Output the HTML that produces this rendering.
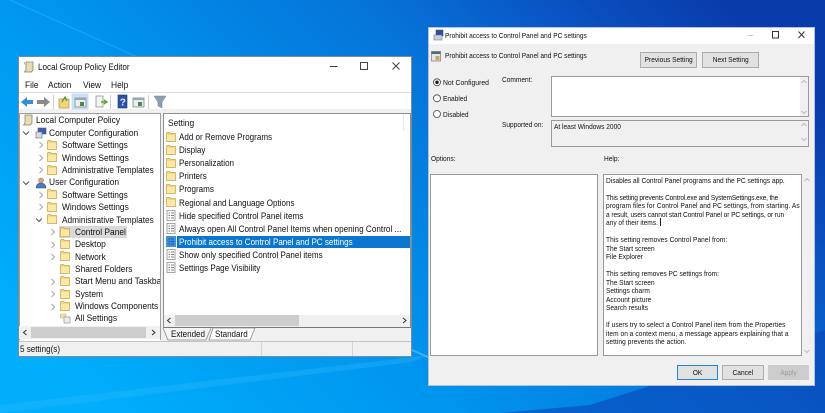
<!DOCTYPE html>
<html><head><meta charset="utf-8"><style>
html,body{margin:0;padding:0}
body{width:825px;height:413px;overflow:hidden;position:relative;background:#0a6fd6}
#w{position:absolute;left:0;top:0;width:825px;height:413px;overflow:hidden;filter:blur(.3px);font-family:"Liberation Sans",sans-serif;color:#111}
#w div{position:absolute;box-sizing:border-box}
.t{white-space:nowrap;font-size:8.8px;line-height:12px;height:12px;transform:scaleX(.955);transform-origin:0 0}
.l{transform:scaleX(.915)}
.d{font-size:7.6px;transform:scaleX(.866);transform-origin:0 0;white-space:nowrap;line-height:9px;height:9px}
svg{position:absolute;overflow:visible}
.b{background:#e1e1e1;border:1px solid #adadad;text-align:center;font-size:7.6px;line-height:13px}
.b span{display:inline-block;transform:scaleX(.87);white-space:nowrap}
</style></head><body><div id="w">
<svg width="0" height="0" style="position:absolute"><defs>
<symbol id="f" viewBox="0 0 10 10"><path d="M.5 2V9.5H9.5V1.5H4.5L3.5.5H1L.5 1Z" fill="#f6d77e" stroke="#c9a548" stroke-width=".7"/><path d="M1 3H9V9H1Z" fill="#fbe7a6"/></symbol>
<symbol id="p" viewBox="0 0 10 11"><path d="M1 .5H9V10.5H1Z" fill="#fff" stroke="#8a8a8a" stroke-width=".8"/><path d="M2.5 3H4M5 3H8M2.5 5.5H4M5 5.5H8M2.5 8H4M5 8H8" stroke="#555" stroke-width=".8"/></symbol>
<symbol id="c" viewBox="0 0 6 8"><path d="M1.5 1L4.5 4L1.5 7" fill="none" stroke="#a6a6a6" stroke-width="1"/></symbol>
<symbol id="o" viewBox="0 0 8 6"><path d="M1 1.5L4 4.5L7 1.5" fill="none" stroke="#555" stroke-width="1"/></symbol>
</defs></svg>
<svg width="825" height="413" style="left:0;top:0">
<defs>
<linearGradient id="bg" x1="0" y1="0.75" x2="1" y2="0.25"><stop offset="0" stop-color="#00aefc"/><stop offset=".35" stop-color="#0094ee"/><stop offset=".66" stop-color="#0672d8"/><stop offset=".87" stop-color="#0a4dbd"/><stop offset="1" stop-color="#0a3bab"/></linearGradient>
</defs>
<rect width="825" height="413" fill="url(#bg)"/>
<path d="M0 405L430 355L412 362L0 413Z" fill="#35bdfb" opacity=".3"/>
<path d="M500 413L590 405L825 330V413Z" fill="#0a45b8" opacity=".6"/>
<path d="M10 0L200 85" stroke="#4dbdf8" stroke-width="1" opacity=".45"/>
<path d="M412 350L430 358" stroke="#7fd2fb" stroke-width="2" opacity=".5"/>
</svg>

<!-- LEFT WINDOW -->
<div style="left:18px;top:56px;width:394px;height:301px;background:#fff;border:1px solid #7f8a96"></div>
<div style="left:19px;top:92px;width:392px;height:1px;background:#d8d8d8"></div>
<div style="left:19px;top:109px;width:392px;height:4px;background:#f0f0f0"></div>
<svg width="12" height="12" style="left:23px;top:61px"><path d="M3 1H10V9L8.5 11H1.5L3 9Z" fill="#e8dcb4" stroke="#8d8467" stroke-width=".8"/><path d="M3 1Q1 1 1.5 3H3" fill="#fff" stroke="#8d8467" stroke-width=".6"/></svg>
<div class="t" style="left:38px;top:61px;transform:scaleX(.923)">Local Group Policy Editor</div>
<div class="t" style="left:25px;top:79px">File</div>
<div class="t" style="left:48px;top:79px">Action</div>
<div class="t" style="left:83px;top:79px">View</div>
<div class="t" style="left:111px;top:79px">Help</div>
<svg width="80" height="12" style="left:327px;top:60px"><path d="M3 6.500H10.500" stroke="#333" stroke-width="1"/><rect x="33.500" y="2.500" width="7" height="7" fill="none" stroke="#444" stroke-width="1"/><path d="M65.500 2.500L72.500 9.500M72.500 2.500L65.500 9.500" stroke="#444" stroke-width="1"/></svg>

<!-- toolbar -->
<svg width="160" height="16" style="left:19px;top:94px">
<path d="M2 8L8 3V6H14V10H8V13Z" fill="#2f8fdc"/>
<path d="M31 8L25 3V6H18V10H25V13Z" fill="#8a8a8a"/>
<path d="M34.500 1V15M91.500 1V15M129.500 1V15" stroke="#d0d0d0"/>
<path d="M40 5H50V14H40Z" fill="#f3d27a" stroke="#b9954a" stroke-width=".7"/><path d="M43 8L46 3L48 7" fill="none" stroke="#3d9b2f" stroke-width="1.200"/>
<rect x="53" y="0" width="16" height="15" fill="#cde4f7" stroke="#a9d0ee" stroke-width=".6"/>
<rect x="56" y="4" width="11" height="9" fill="#e8eef2" stroke="#7f8b93" stroke-width=".8"/><rect x="56" y="4" width="11" height="2" fill="#9aa7b0"/><rect x="61" y="8" width="4" height="4" fill="#4d8a4a"/>
<path d="M77 2H84V13H77Z" fill="#f4f4f0" stroke="#8e8e8e" stroke-width=".8"/><path d="M82 8H87M85 6L88 8L85 10" fill="none" stroke="#5ca83c" stroke-width="1.400"/>
<rect x="99" y="1" width="9" height="13" fill="#2b52a8" stroke="#1b3578" stroke-width=".6"/><text x="100.800" y="11.500" font-family="Liberation Sans" font-size="10" font-weight="bold" fill="#dfe8ff">?</text>
<rect x="114" y="4" width="11" height="9" fill="#e8eef2" stroke="#7f8b93" stroke-width=".8"/><rect x="114" y="4" width="11" height="2" fill="#9aa7b0"/><rect x="119" y="8" width="4" height="4" fill="#4d8a4a"/>
<path d="M135 2H147L143 8V14L139 12V8Z" fill="#8ba0ad" stroke="#6f8490" stroke-width=".5"/>
</svg>

<!-- tree -->
<div style="left:19px;top:113px;width:142px;height:227px;background:#fff;border:1px solid #a0a0a0;border-bottom:0"></div>
<div style="left:161px;top:113px;width:2px;height:227px;background:#f0f0f0"></div>
<div style="left:59px;top:226px;width:68px;height:12px;background:#d9d9d9"></div>
<svg width="12" height="12" style="left:22px;top:114px"><path d="M3 1H10V9L8.500 11H1.500L3 9Z" fill="#e8dcb4" stroke="#8d8467" stroke-width=".8"/></svg>
<div class="t" style="left:36px;top:114px">Local Computer Policy</div>
<svg width="8" height="6" style="left:22px;top:130px"><use href="#o" width="8" height="6"/></svg>
<svg width="12" height="12" style="left:35px;top:127px"><rect x="3" y="1" width="8" height="6" fill="#3a5fb8" stroke="#555" stroke-width=".6"/><rect x="1" y="5" width="6" height="6" fill="#d8dde6" stroke="#666" stroke-width=".6"/></svg>
<div class="t" style="left:49px;top:127px">Computer Configuration</div>
<svg width="6" height="8" style="left:38px;top:141px"><use href="#c" width="6" height="8"/></svg>
<svg width="10" height="10" style="left:47px;top:140px"><use href="#f" width="10" height="10"/></svg>
<div class="t" style="left:62px;top:139px">Software Settings</div>
<svg width="6" height="8" style="left:38px;top:154px"><use href="#c" width="6" height="8"/></svg>
<svg width="10" height="10" style="left:47px;top:152px"><use href="#f" width="10" height="10"/></svg>
<div class="t" style="left:62px;top:151.500px">Windows Settings</div>
<svg width="6" height="8" style="left:38px;top:166px"><use href="#c" width="6" height="8"/></svg>
<svg width="10" height="10" style="left:47px;top:165px"><use href="#f" width="10" height="10"/></svg>
<div class="t" style="left:62px;top:164px;transform:scaleX(.94)">Administrative Templates</div>
<svg width="8" height="6" style="left:22px;top:180px"><use href="#o" width="8" height="6"/></svg>
<svg width="12" height="12" style="left:35px;top:177px"><circle cx="6" cy="3.500" r="2.500" fill="#d9a77a" stroke="#666" stroke-width=".5"/><path d="M1 11Q1 6 6 6Q11 6 11 11Z" fill="#4a78c8" stroke="#555" stroke-width=".5"/></svg>
<div class="t" style="left:49px;top:176px">User Configuration</div>
<svg width="6" height="8" style="left:38px;top:191px"><use href="#c" width="6" height="8"/></svg>
<svg width="10" height="10" style="left:47px;top:189px"><use href="#f" width="10" height="10"/></svg>
<div class="t" style="left:62px;top:189px">Software Settings</div>
<svg width="6" height="8" style="left:38px;top:203px"><use href="#c" width="6" height="8"/></svg>
<svg width="10" height="10" style="left:47px;top:202px"><use href="#f" width="10" height="10"/></svg>
<div class="t" style="left:62px;top:201px">Windows Settings</div>
<svg width="8" height="6" style="left:35px;top:217px"><use href="#o" width="8" height="6"/></svg>
<svg width="10" height="10" style="left:47px;top:214px"><use href="#f" width="10" height="10"/></svg>
<div class="t" style="left:62px;top:213.500px;transform:scaleX(.94)">Administrative Templates</div>
<svg width="6" height="8" style="left:50px;top:228px"><use href="#c" width="6" height="8"/></svg>
<svg width="10" height="10" style="left:60px;top:227px"><use href="#f" width="10" height="10"/></svg>
<div class="t" style="left:75px;top:226px">Control Panel</div>
<svg width="6" height="8" style="left:50px;top:241px"><use href="#c" width="6" height="8"/></svg>
<svg width="10" height="10" style="left:60px;top:239px"><use href="#f" width="10" height="10"/></svg>
<div class="t" style="left:75px;top:238px">Desktop</div>
<svg width="6" height="8" style="left:50px;top:253px"><use href="#c" width="6" height="8"/></svg>
<svg width="10" height="10" style="left:60px;top:251px"><use href="#f" width="10" height="10"/></svg>
<div class="t" style="left:75px;top:250.500px">Network</div>
<svg width="10" height="10" style="left:60px;top:264px"><use href="#f" width="10" height="10"/></svg>
<div class="t" style="left:75px;top:263px">Shared Folders</div>
<svg width="6" height="8" style="left:50px;top:278px"><use href="#c" width="6" height="8"/></svg>
<svg width="10" height="10" style="left:60px;top:276px"><use href="#f" width="10" height="10"/></svg>
<div style="left:75px;top:275px;width:85px;height:12px;overflow:hidden"><div class="t" style="left:0;top:0">Start Menu and Taskbar</div></div>
<svg width="6" height="8" style="left:50px;top:290px"><use href="#c" width="6" height="8"/></svg>
<svg width="10" height="10" style="left:60px;top:289px"><use href="#f" width="10" height="10"/></svg>
<div class="t" style="left:75px;top:288px">System</div>
<svg width="6" height="8" style="left:50px;top:303px"><use href="#c" width="6" height="8"/></svg>
<svg width="10" height="10" style="left:60px;top:301px"><use href="#f" width="10" height="10"/></svg>
<div style="left:75px;top:300px;width:85px;height:12px;overflow:hidden"><div class="t" style="left:0;top:0;transform:scaleX(.945)">Windows Components</div></div>
<svg width="12" height="12" style="left:60px;top:312px"><path d="M.5 2H6V6H.5Z" fill="#f3dfa0" stroke="#c9b578" stroke-width=".6"/><path d="M4 5H10V11H4Z" fill="#eee" stroke="#999" stroke-width=".7"/></svg>
<div class="t" style="left:75px;top:312px">All Settings</div>
<div style="left:19px;top:326px;width:141px;height:13px;background:#f0f0f0"></div>
<div style="left:31px;top:327px;width:115px;height:11px;background:#cdcdcd"></div>
<svg width="141" height="13" style="left:19px;top:326px"><path d="M7.500 4L4.500 6.500L7.500 9" fill="none" stroke="#333"/><path d="M133 4L136 6.500L133 9" fill="none" stroke="#333"/></svg>

<!-- list -->
<div style="left:163px;top:113px;width:248px;height:215px;background:#fff;border:1px solid #8f8f8f;border-bottom:1px solid #777"></div>
<div class="t" style="left:168px;top:116.500px">Setting</div>
<div style="left:403px;top:114px;width:1px;height:17px;background:#e5e5e5"></div>
<div style="left:177px;top:236px;width:233px;height:12px;background:#0a76d0"></div>
<svg width="10" height="10" style="left:166px;top:132px"><use href="#f" width="10" height="10"/></svg>
<div class="t l" style="left:179px;top:131px">Add or Remove Programs</div>
<svg width="10" height="10" style="left:166px;top:145px"><use href="#f" width="10" height="10"/></svg>
<div class="t l" style="left:179px;top:144px">Display</div>
<svg width="10" height="10" style="left:166px;top:158px"><use href="#f" width="10" height="10"/></svg>
<div class="t l" style="left:179px;top:157px">Personalization</div>
<svg width="10" height="10" style="left:166px;top:171px"><use href="#f" width="10" height="10"/></svg>
<div class="t l" style="left:179px;top:170px">Printers</div>
<svg width="10" height="10" style="left:166px;top:184px"><use href="#f" width="10" height="10"/></svg>
<div class="t l" style="left:179px;top:183px">Programs</div>
<svg width="10" height="10" style="left:166px;top:197px"><use href="#f" width="10" height="10"/></svg>
<div class="t l" style="left:179px;top:196.500px">Regional and Language Options</div>
<svg width="10" height="11" style="left:166px;top:210px"><use href="#p" width="10" height="11"/></svg>
<div class="t l" style="left:179px;top:209.500px;transform:scaleX(.925)">Hide specified Control Panel items</div>
<svg width="10" height="11" style="left:166px;top:223px"><use href="#p" width="10" height="11"/></svg>
<div class="t l" style="left:179px;top:222.500px;transform:scaleX(.93)">Always open All Control Panel Items when opening Control ...</div>
<svg width="10" height="11" style="left:166px;top:236px"><rect width="10" height="11" fill="#3f8ed6"/><path d="M2.500 3H4M5 3H8M2.500 5.500H4M5 5.500H8M2.500 8H4M5 8H8" stroke="#0d4f96" stroke-width=".8"/></svg>
<div class="t l" style="left:179px;top:235.500px;color:#fff">Prohibit access to Control Panel and PC settings</div>
<svg width="10" height="11" style="left:166px;top:249px"><use href="#p" width="10" height="11"/></svg>
<div class="t l" style="left:179px;top:248.500px">Show only specified Control Panel items</div>
<svg width="10" height="11" style="left:166px;top:262px"><use href="#p" width="10" height="11"/></svg>
<div class="t l" style="left:179px;top:261.500px">Settings Page Visibility</div>
<div style="left:164px;top:315px;width:246px;height:12px;background:#f0f0f0"></div>
<div style="left:175px;top:315px;width:124px;height:11px;background:#cdcdcd"></div>
<svg width="246" height="12" style="left:164px;top:315px"><path d="M6.500 3L3.500 5.500L6.500 8" fill="none" stroke="#333"/><path d="M239 3L242 5.500L239 8" fill="none" stroke="#333"/></svg>
<!-- tabs -->
<div style="left:161px;top:328px;width:250px;height:13px;background:#f0f0f0"></div>
<svg width="100" height="14" style="left:162px;top:327px"><path d="M1 1L6 13H44L49 1" fill="#f4f4f4" stroke="#8a8a8a" stroke-width=".8"/><path d="M47 13L51 1H93L88 13Z" fill="#fff" stroke="#8a8a8a" stroke-width=".8"/></svg>
<div class="t l" style="left:170.500px;top:328px">Extended</div>
<div class="t l" style="left:214.500px;top:328px">Standard</div>
<!-- status -->
<div style="left:19px;top:341px;width:392px;height:15px;background:#f0f0f0;border-top:1px solid #c4c4c4"></div>
<div style="left:261px;top:342px;width:1px;height:14px;background:#d4d4d4"></div>
<div style="left:352px;top:342px;width:1px;height:14px;background:#d4d4d4"></div>
<div class="t" style="left:20px;top:343px;transform:scaleX(.92)">5 setting(s)</div>

<!-- RIGHT WINDOW -->
<div style="left:428px;top:27px;width:387px;height:359px;background:#f0f0f0;border:1px solid #b8c2cc"></div>
<div style="left:429px;top:28px;width:385px;height:16px;background:#fff"></div>
<svg width="11" height="11" style="left:433px;top:30px"><rect x="3" y="0" width="7" height="6" fill="#2d4ea8" stroke="#444" stroke-width=".5"/><rect x="1" y="5" width="8" height="5" fill="#c9d0dc" stroke="#666" stroke-width=".5"/></svg>
<div class="d" style="left:445px;top:31px">Prohibit access to Control Panel and PC settings</div>
<svg width="70" height="10" style="left:746px;top:30px"><path d="M1 5.500H7" stroke="#ccc"/><rect x="26.500" y="1.500" width="6" height="6.500" fill="none" stroke="#333"/><path d="M52.500 1.500L58.500 8M58.500 1.500L52.500 8" stroke="#333"/></svg>
<svg width="11" height="11" style="left:431px;top:51px"><rect x=".5" y=".5" width="9" height="9.500" fill="#e4e7ea" stroke="#777" stroke-width=".7"/><rect x=".5" y=".5" width="9" height="2.500" fill="#4d6a7e"/><rect x="4.500" y="5" width="4" height="4" fill="#caa94f"/></svg>
<div class="d" style="left:445px;top:51px">Prohibit access to Control Panel and PC settings</div>
<div class="b" style="left:640px;top:52px;width:57px;height:16px"><span>Previous Setting</span></div>
<div class="b" style="left:702px;top:52px;width:57px;height:16px"><span>Next Setting</span></div>

<svg width="12" height="50" style="left:431px;top:76px"><circle cx="6" cy="6.300" r="3.500" fill="#fff" stroke="#444" stroke-width=".8"/><circle cx="6" cy="6.300" r="1.800" fill="#222"/><circle cx="6" cy="22.300" r="3.500" fill="#fff" stroke="#444" stroke-width=".8"/><circle cx="6" cy="38" r="3.500" fill="#fff" stroke="#444" stroke-width=".8"/></svg>
<div class="d" style="left:443px;top:78px;transform:scaleX(.9)">Not Configured</div>
<div class="d" style="left:443px;top:94px">Enabled</div>
<div class="d" style="left:443px;top:110px">Disabled</div>
<div class="d" style="left:502px;top:75px">Comment:</div>
<div class="d" style="left:502px;top:119.500px">Supported on:</div>
<div style="left:551px;top:76px;width:258px;height:41px;background:#fff;border:1px solid #999"></div>
<div style="left:800px;top:77px;width:8px;height:39px;background:#f0f0f0"></div>
<div style="left:551px;top:120px;width:258px;height:27px;background:#f0f0f0;border:1px solid #999"></div>
<svg width="8" height="70" style="left:800px;top:78px"><path d="M1.500 5L4 2.500L6.500 5M1.500 33L4 35.500L6.500 33M1.500 48L4 45.500L6.500 48M1.500 60L4 62.500L6.500 60" fill="none" stroke="#bbb"/></svg>
<div class="d" style="left:554px;top:122px">At least Windows 2000</div>
<div class="d" style="left:431px;top:154px">Options:</div>
<div class="d" style="left:604px;top:154px">Help:</div>
<div style="left:430px;top:174px;width:168px;height:182px;background:#fff;border:1px solid #999"></div>
<div style="left:603px;top:174px;width:199px;height:182px;background:#fff;border:1px solid #999"></div>
<svg width="8" height="180" style="left:803px;top:175px"><path d="M1.500 6L4 3.500L6.500 6M1.500 175L4 177.500L6.500 175" fill="none" stroke="#bbb"/></svg>
<div class="d" style="left:606px;top:175.500px">Disables all Control Panel programs and the PC settings app.</div>
<div class="d" style="left:606px;top:192.500px;letter-spacing:-.18px">This setting prevents Control.exe and SystemSettings.exe, the</div>
<div class="d" style="left:606px;top:201px;letter-spacing:.09px">program files for Control Panel and PC settings, from starting. As</div>
<div class="d" style="left:606px;top:209.500px;letter-spacing:-.09px">a result, users cannot start Control Panel or PC settings, or run</div>
<div class="d" style="left:606px;top:218px">any of their items.</div>
<div style="left:660px;top:218px;width:1px;height:8px;background:#222"></div>
<div class="d" style="left:606px;top:235px;letter-spacing:.06px">This setting removes Control Panel from:</div>
<div class="d" style="left:606px;top:243.500px">The Start screen</div>
<div class="d" style="left:606px;top:252px">File Explorer</div>
<div class="d" style="left:606px;top:269px">This setting removes PC settings from:</div>
<div class="d" style="left:606px;top:277.500px">The Start screen</div>
<div class="d" style="left:606px;top:286px">Settings charm</div>
<div class="d" style="left:606px;top:294.500px">Account picture</div>
<div class="d" style="left:606px;top:303px">Search results</div>
<div class="d" style="left:606px;top:320px;letter-spacing:.06px">If users try to select a Control Panel item from the Properties</div>
<div class="d" style="left:606px;top:328.500px;letter-spacing:.06px">item on a context menu, a message appears explaining that a</div>
<div class="d" style="left:606px;top:337px;letter-spacing:.08px">setting prevents the action.</div>
<div class="b" style="left:677px;top:365px;width:41px;height:15px;border:1px solid #1e86e0;line-height:13px"><span>OK</span></div>
<div class="b" style="left:722px;top:365px;width:42px;height:15px"><span>Cancel</span></div>
<div class="b" style="left:768px;top:365px;width:41px;height:15px;background:#ccc;border-color:#ccc;color:#9a9a9a"><span>Apply</span></div>
</div></body></html>
